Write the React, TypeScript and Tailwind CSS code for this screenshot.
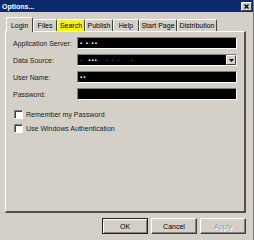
import { ReactNode } from 'react';

const FONT = "font-['Liberation_Sans',Arial,sans-serif]";

interface TabProps {
  label: string;
  width: string;
  selected?: boolean;
  highlight?: boolean;
}

const tabs: TabProps[] = [
  { label: 'Login', width: 'w-[27px]', selected: true },
  { label: 'Files', width: 'w-[24px]' },
  { label: 'Search', width: 'w-[28px]', highlight: true },
  { label: 'Publish', width: 'w-[28px]' },
  { label: 'Help', width: 'w-[26px]' },
  { label: 'Start Page', width: 'w-[38px]' },
  { label: 'Distribution', width: 'w-[40px]' },
];

function Tab({ label, width, selected, highlight }: TabProps) {
  if (selected) {
    return (
      <div
        className={`${width} h-[15px] -mb-px z-10 flex items-center justify-center bg-[#d4d0c8] border-t border-l border-white border-r border-r-[#404040] rounded-tl-[2px] rounded-tr-[2px]`}
      >
        <span className="text-[7px] text-black leading-none">{label}</span>
      </div>
    );
  }
  return (
    <div
      className={`${width} h-[12px] flex items-center justify-center border-t border-l border-white border-r border-r-[#404040] rounded-tl-[2px] rounded-tr-[2px]`}
    >
      <span
        className={`text-[7px] leading-none text-black ${highlight ? 'bg-[#f2f21c] px-[2px] py-[2px]' : ''}`}
      >
        {label}
      </span>
    </div>
  );
}

function BlackField({ children, dropdown }: { children?: ReactNode; dropdown?: boolean }) {
  return (
    <div className="w-[160px] h-[12px] bg-black border border-t-[#808080] border-l-[#808080] border-r-white border-b-white flex items-center justify-between">
      <span className="pl-[2px] text-[6px] text-white leading-none tracking-[1px]">{children}</span>
      {dropdown && (
        <div className="w-[10px] h-[10px] bg-[#d4d0c8] border border-t-white border-l-white border-r-[#404040] border-b-[#404040] flex items-center justify-center">
          <svg width="5" height="3" viewBox="0 0 5 3">
            <path d="M0 0h5L2.5 3z" fill="#000" />
          </svg>
        </div>
      )}
    </div>
  );
}

function Row({ label, children }: { label: string; children: ReactNode }) {
  return (
    <div className="flex items-center">
      <span className="w-[64px] text-[7px] text-[#1a1a1a] leading-none">{label}</span>
      {children}
    </div>
  );
}

function CheckRow({ label }: { label: string }) {
  return (
    <div className="flex items-center gap-[3px]">
      <div className="w-[9px] h-[9px] bg-white border border-t-[#808080] border-l-[#808080] border-r-white border-b-white shadow-[inset_1px_1px_#404040]" />
      <span className="text-[7px] text-[#1a1a1a] leading-none">{label}</span>
    </div>
  );
}

function Button({ label, isDefault, disabled }: { label: string; isDefault?: boolean; disabled?: boolean }) {
  return (
    <div
      className={`w-[46px] h-[16px] flex items-center justify-center bg-[#d4d0c8] border ${
        isDefault
          ? 'border-[#202020] shadow-[inset_1px_1px_#fff,inset_-1px_-1px_#808080]'
          : 'border-t-white border-l-white border-r-[#404040] border-b-[#404040] shadow-[inset_-1px_-1px_#808080]'
      }`}
    >
      <span
        className={`text-[7px] leading-none ${disabled ? 'text-[#9a9a9a] [text-shadow:1px_1px_#fff]' : 'text-black'}`}
      >
        {label}
      </span>
    </div>
  );
}

export default function App() {
  return (
    <div className={`${FONT} w-[254px] h-[240px] bg-[#d4d0c8] flex flex-col overflow-hidden border-r border-r-[#808080]`}>
      <div className="h-[12px] bg-[#0c2a6c] flex items-center justify-between pl-[2px] pr-[1px]">
        <span className="text-[7px] font-bold text-white leading-none">Options...</span>
        <div className="w-[11px] h-[9px] bg-[#d4d0c8] border border-t-white border-l-white border-r-[#404040] border-b-[#404040] flex items-center justify-center">
          <svg width="5" height="5" viewBox="0 0 5 5">
            <path d="M0.5 0.5l4 4M4.5 0.5l-4 4" stroke="#000" strokeWidth="1.3" />
          </svg>
        </div>
      </div>

      <div className="flex flex-col pl-[5px] pr-[7px] pt-[5px]">
        <div className="flex items-end pl-[1px]">
          {tabs.map((tab) => (
            <Tab key={tab.label} {...tab} />
          ))}
        </div>

        <div className="h-[182px] border-t border-l border-white border-r-2 border-b-2 border-r-[#505050] border-b-[#505050] flex flex-col pl-[7px] pt-[5px]">
          <div className="flex flex-col gap-[5px]">
            <Row label="Application Server:">
              <BlackField>▪ ▪ ▪▪</BlackField>
            </Row>
            <Row label="Data Source:">
              <BlackField dropdown>·&nbsp; ▪▪▪· &nbsp;· · · &nbsp;&nbsp;&nbsp;·</BlackField>
            </Row>
            <Row label="User Name:">
              <BlackField>▪▪</BlackField>
            </Row>
            <Row label="Password:">
              <BlackField />
            </Row>
          </div>

          <div className="flex flex-col gap-[5px] mt-[10px] pl-[1px]">
            <CheckRow label="Remember my Password" />
            <CheckRow label="Use Windows Authentication" />
          </div>
        </div>

        <div className="flex justify-end gap-[3px] mt-[5px]">
          <Button label="OK" isDefault />
          <Button label="Cancel" />
          <Button label="Apply" disabled />
        </div>
      </div>
    </div>
  );
}
